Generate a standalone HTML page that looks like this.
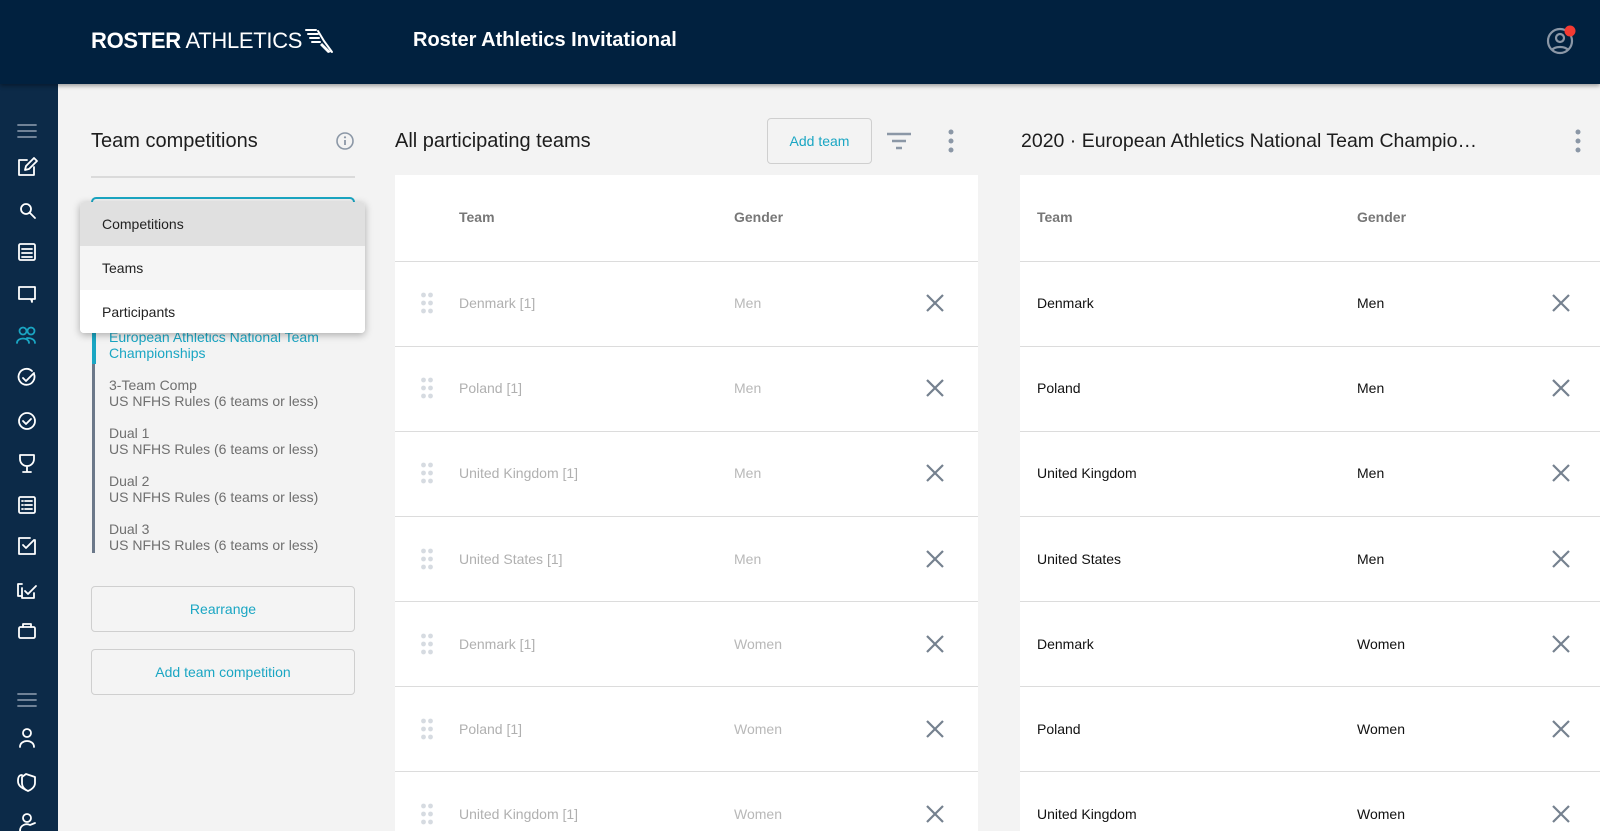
<!DOCTYPE html>
<html><head><meta charset="utf-8"><style>
*{box-sizing:border-box;margin:0;padding:0}
body{width:1600px;height:831px;overflow:hidden;background:#f3f3f3;font-family:"Liberation Sans",Arial,sans-serif;position:relative}
.abs{position:absolute}
.hdr{left:0;top:0;width:1600px;height:84px;background:#01213f;box-shadow:0 2px 4px rgba(0,0,0,.35);z-index:3}
.side{left:0;top:84px;width:58px;height:747px;background:#0c2a48}
.ttl{font-size:20px;color:#1d1d1d}
.panel{background:#fff}
.line{position:absolute;height:1px;background:#dcdcdc}
.th{position:absolute;font-size:14px;font-weight:bold;color:#777}
.td{position:absolute;font-size:14px}
.btn{position:absolute;border:1px solid #cfcfcf;border-radius:4px;background:#f4f4f4;color:#1aa6c3;font-size:14px;display:flex;align-items:center;justify-content:center}
.li{position:absolute;left:109px;font-size:14px;color:#6f6f6f;line-height:16px}
</style></head><body>
<div class="abs hdr">
 <div class="abs" style="left:91px;top:28px;color:#fff;font-size:22px;letter-spacing:-0.3px"><b>ROSTER</b> ATHLETICS</div>
 <svg class="abs" style="left:304px;top:27px" width="30" height="28" viewBox="0 0 30 28"><g stroke="#fff" stroke-width="2" fill="none" stroke-linecap="round"><path d="M2 3h10M4 7h10M6 11h9M8 15h8"/><path d="M14 4l6 10 8 11"/></g><path d="M18 16l9 9-3 1-8-8z" fill="#fff"/></svg>
 <div class="abs" style="left:413px;top:29px;color:#fff;font-size:20px;font-weight:bold">Roster Athletics Invitational</div>
 <svg class="abs" style="left:1546px;top:25px" width="34" height="34" viewBox="0 0 34 34"><g stroke="#8b97a6" stroke-width="2.2" fill="none"><circle cx="14" cy="16" r="12"/><circle cx="14" cy="13" r="4"/><path d="M6 25c3-4 13-4 16 0"/></g><circle cx="24" cy="6" r="5.5" fill="#f43a32"/></svg>
</div>
<div class="abs side">
<svg width="58" height="747" viewBox="0 84 58 747" style="position:absolute;left:0;top:0"><g fill="none" stroke="#fff" stroke-width="1.8" stroke-linecap="round" stroke-linejoin="round">
<g stroke="#7f8fa2"><path d="M18 125h18M18 131h18M18 137h18"/></g>
<path d="M27 160h-8v15h15v-8"/><path d="M25 170l1-4 8-8 3 3-8 8z"/>
<circle cx="26" cy="209" r="5"/><path d="M30 213l5 5"/>
<rect x="19" y="244" width="16" height="16" rx="1.5"/><path d="M22 249h10M22 253h10M22 257h10"/>
<path d="M19 287h16v12h-3v3l-1-3h-12z"/>
<g stroke="#1aa6c3"><circle cx="23" cy="331" r="3.5"/><circle cx="31" cy="331" r="3.5"/><path d="M17 343c0-6 12-6 12 0M27 338c5 0 8 2 8 5"/></g>
<path d="M34 374a8 8 0 1 1-2-3"/><path d="M23 378l3 3 8-8"/>
<circle cx="27" cy="421" r="8"/><path d="M23 421l3 3 5-5"/>
<path d="M20 455h14v4a7 7 0 0 1-14 0zM27 466v5M23 472h8"/>
<rect x="19" y="497" width="16" height="16" rx="1.5"/><path d="M22 501h1M25 501h7M22 505h1M25 505h7M22 509h1M25 509h7"/>
<path d="M35 540v14h-16v-16h11"/><path d="M23 545l3 3 8-8"/>
<path d="M22 584h-4v12h4"/><path d="M22 588v10h12v-5"/><path d="M25 591l3 3 8-8"/>
<rect x="19" y="627" width="16" height="11" rx="1.5"/><path d="M23 627v-3h8v3"/>
<g stroke="#7f8fa2"><path d="M18 694h18M18 700h18M18 706h18"/></g>
<circle cx="27" cy="733" r="4"/><path d="M20 747c0-8 14-8 14 0"/>
<path d="M22 775c-3 0-4 2-4 6 0 5 4 7 8 9"/><path d="M26 774l9 3v6c0 4-4 7-7 8-3-1-6-4-6-8v-6z"/>
<circle cx="27" cy="818" r="4"/><path d="M20 831c0-6 6-8 10-6l5-2"/>
</g></svg>
</div>

<div class="abs ttl" style="left:91px;top:130px">Team competitions</div>
<svg class="abs" style="left:335px;top:131px" width="20" height="20" viewBox="0 0 20 20"><circle cx="10" cy="10" r="8" fill="none" stroke="#8b97a6" stroke-width="1.6"/><path d="M10 9v5" stroke="#8b97a6" stroke-width="1.8"/><circle cx="10" cy="6.3" r="1.1" fill="#8b97a6"/></svg>
<div class="line" style="left:91px;top:176px;width:264px;height:2px;background:#dadada"></div>
<div class="abs" style="left:91px;top:197px;width:264px;height:20px;border:2px solid #1aa6c3;border-bottom:none;border-radius:5px 5px 0 0"></div>
<div class="abs" style="left:92px;top:328px;width:4px;height:36px;background:#1aa6c3"></div>
<div class="abs" style="left:92px;top:364px;width:3px;height:189px;background:#6b7889"></div>
<div class="li" style="top:329px;color:#1aa6c3">European Athletics National Team<br>Championships</div>
<div class="li" style="top:377px">3-Team Comp<br>US NFHS Rules (6 teams or less)</div>
<div class="li" style="top:425px">Dual 1<br>US NFHS Rules (6 teams or less)</div>
<div class="li" style="top:473px">Dual 2<br>US NFHS Rules (6 teams or less)</div>
<div class="li" style="top:521px">Dual 3<br>US NFHS Rules (6 teams or less)</div>
<div class="btn" style="left:91px;top:586px;width:264px;height:46px">Rearrange</div>
<div class="btn" style="left:91px;top:649px;width:264px;height:46px">Add team competition</div>
<div class="abs" style="left:80px;top:202px;width:285px;height:131px;background:#fff;border-radius:4px;box-shadow:0 2px 8px rgba(0,0,0,.3);overflow:hidden;z-index:2;font-size:14px;color:#222">
 <div style="height:44px;background:#e0e0e0;padding:14px 0 0 22px">Competitions</div>
 <div style="height:44px;background:#f5f5f5;padding:14px 0 0 22px">Teams</div>
 <div style="height:43px;background:#fff;padding:14px 0 0 22px">Participants</div>
</div>

<div class="abs ttl" style="left:395px;top:130px">All participating teams</div>
<div class="btn" style="left:767px;top:118px;width:105px;height:46px;background:#f3f3f3">Add team</div>
<svg class="abs" style="left:886px;top:131px" width="26" height="20" viewBox="0 0 26 20"><path d="M1 3h24M6 10h14M10 17h6" stroke="#8b97a6" stroke-width="2.4"/></svg>
<svg class="abs" style="left:945px;top:129px" width="12" height="24" viewBox="0 0 12 24"><g fill="#8b97a6"><circle cx="6" cy="3" r="2.5"/><circle cx="6" cy="12" r="2.5"/><circle cx="6" cy="21" r="2.5"/></g></svg>
<div class="abs panel" style="left:395px;top:175px;width:583px;height:656px"></div>
<div class="abs panel" style="left:1020px;top:175px;width:580px;height:656px"></div>
<div class="abs ttl" style="left:1021px;top:130px;font-size:19.5px">2020 · European Athletics National Team Champio…</div>
<svg class="abs" style="left:1572px;top:129px" width="12" height="24" viewBox="0 0 12 24"><g fill="#8b97a6"><circle cx="6" cy="3" r="2.5"/><circle cx="6" cy="12" r="2.5"/><circle cx="6" cy="21" r="2.5"/></g></svg>
<div class="th" style="left:459px;top:209px">Team</div><div class="th" style="left:734px;top:209px">Gender</div>
<div class="th" style="left:1037px;top:209px">Team</div><div class="th" style="left:1357px;top:209px">Gender</div>
<div id="rows"></div>
<script>
var d=[["Denmark","Men"],["Poland","Men"],["United Kingdom","Men"],["United States","Men"],["Denmark","Women"],["Poland","Women"],["United Kingdom","Women"]];
var h="";
[261,346,431,516,601,686,771].forEach(function(y){h+='<div class="line" style="left:395px;top:'+y+'px;width:583px"></div><div class="line" style="left:1020px;top:'+y+'px;width:580px"></div>';});
d.forEach(function(r,i){var c=303+i*85.2;
h+='<svg class="abs" style="left:420px;top:'+(c-11)+'px" width="14" height="22" viewBox="0 0 14 22"><g fill="#d6dbe1"><circle cx="3.5" cy="3" r="2.4"/><circle cx="10.5" cy="3" r="2.4"/><circle cx="3.5" cy="11" r="2.4"/><circle cx="10.5" cy="11" r="2.4"/><circle cx="3.5" cy="19" r="2.4"/><circle cx="10.5" cy="19" r="2.4"/></g></svg>';
h+='<div class="td" style="left:459px;top:'+(c-8)+'px;color:#b0b0b0">'+r[0]+' [1]</div><div class="td" style="left:734px;top:'+(c-8)+'px;color:#b8b8b8">'+r[1]+'</div>';
h+='<div class="td" style="left:1037px;top:'+(c-8)+'px;color:#111">'+r[0]+'</div><div class="td" style="left:1357px;top:'+(c-8)+'px;color:#111">'+r[1]+'</div>';
[935,1561].forEach(function(x){h+='<svg class="abs" style="left:'+(x-10)+'px;top:'+(c-10)+'px" width="20" height="20" viewBox="0 0 20 20"><path d="M2 2l16 16M18 2L2 18" stroke="#75818f" stroke-width="2.2"/></svg>';});
});
document.getElementById("rows").innerHTML=h;
</script>
</body></html>
